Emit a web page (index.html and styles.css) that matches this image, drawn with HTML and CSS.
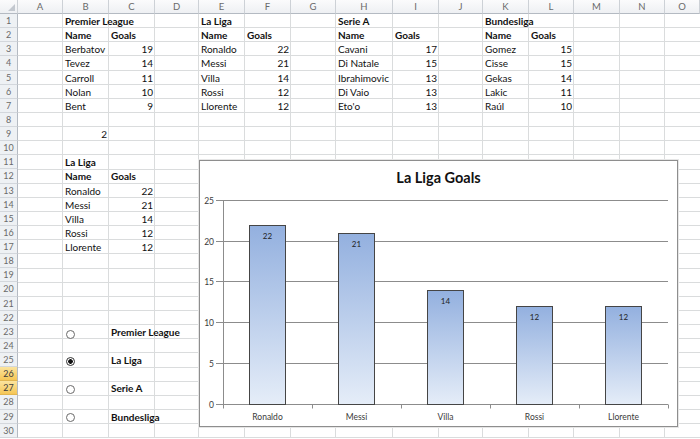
FILE: index.html
```html
<!DOCTYPE html>
<html>
<head>
<meta charset="utf-8">
<link rel="stylesheet" href="styles.css">
</head>
<body>
<div class="sheet">
  <div class="colheads">
    <div class="ch corner"><svg width="7" height="7" viewBox="0 0 7 7"><path d="M7 0V7H0Z" fill="#c3c8cf"/></svg></div>
    <div class="ch w45">A</div>
    <div class="ch w46">B</div>
    <div class="ch w46">C</div>
    <div class="ch w44">D</div>
    <div class="ch w46">E</div>
    <div class="ch w46">F</div>
    <div class="ch w45">G</div>
    <div class="ch w57">H</div>
    <div class="ch w46">I</div>
    <div class="ch w44">J</div>
    <div class="ch w46">K</div>
    <div class="ch w45">L</div>
    <div class="ch w46">M</div>
    <div class="ch w45">N</div>
    <div class="ch wrest">O</div>
  </div>
  <div class="body">
    <div class="rowheads">
      <div class="rh">1</div><div class="rh">2</div><div class="rh">3</div><div class="rh">4</div><div class="rh">5</div>
      <div class="rh">6</div><div class="rh">7</div><div class="rh">8</div><div class="rh">9</div><div class="rh">10</div>
      <div class="rh">11</div><div class="rh">12</div><div class="rh">13</div><div class="rh">14</div><div class="rh">15</div>
      <div class="rh">16</div><div class="rh">17</div><div class="rh">18</div><div class="rh">19</div><div class="rh">20</div>
      <div class="rh">21</div><div class="rh">22</div><div class="rh">23</div><div class="rh">24</div><div class="rh">25</div>
      <div class="rh sel">26</div><div class="rh sel">27</div><div class="rh">28</div><div class="rh">29</div><div class="rh">30</div>
    </div>
    <div class="cells">
      <!-- Premier League -->
      <div class="c b r1 cB">Premier League</div>
      <div class="c b r2 cB">Name</div><div class="c b r2 cC">Goals</div>
      <div class="c r3 cB">Berbatov</div><div class="c n r3 cC">19</div>
      <div class="c r4 cB">Tevez</div><div class="c n r4 cC">14</div>
      <div class="c r5 cB">Carroll</div><div class="c n r5 cC">11</div>
      <div class="c r6 cB">Nolan</div><div class="c n r6 cC">10</div>
      <div class="c r7 cB">Bent</div><div class="c n r7 cC">9</div>
      <!-- La Liga -->
      <div class="c b r1 cE">La Liga</div>
      <div class="c b r2 cE">Name</div><div class="c b r2 cF">Goals</div>
      <div class="c r3 cE">Ronaldo</div><div class="c n r3 cF">22</div>
      <div class="c r4 cE">Messi</div><div class="c n r4 cF">21</div>
      <div class="c r5 cE">Villa</div><div class="c n r5 cF">14</div>
      <div class="c r6 cE">Rossi</div><div class="c n r6 cF">12</div>
      <div class="c r7 cE">Llorente</div><div class="c n r7 cF">12</div>
      <!-- Serie A -->
      <div class="c b r1 cH">Serie A</div>
      <div class="c b r2 cH">Name</div><div class="c b r2 cI">Goals</div>
      <div class="c r3 cH">Cavani</div><div class="c n r3 cI">17</div>
      <div class="c r4 cH">Di Natale</div><div class="c n r4 cI">15</div>
      <div class="c r5 cH">Ibrahimovic</div><div class="c n r5 cI">13</div>
      <div class="c r6 cH">Di Vaio</div><div class="c n r6 cI">13</div>
      <div class="c r7 cH">Eto'o</div><div class="c n r7 cI">13</div>
      <!-- Bundesliga -->
      <div class="c b r1 cK">Bundesliga</div>
      <div class="c b r2 cK">Name</div><div class="c b r2 cL">Goals</div>
      <div class="c r3 cK">Gomez</div><div class="c n r3 cL">15</div>
      <div class="c r4 cK">Cisse</div><div class="c n r4 cL">15</div>
      <div class="c r5 cK">Gekas</div><div class="c n r5 cL">14</div>
      <div class="c r6 cK">Lakic</div><div class="c n r6 cL">11</div>
      <div class="c r7 cK">Raúl</div><div class="c n r7 cL">10</div>
      <!-- selector -->
      <div class="c n r9 cB">2</div>
      <div class="c b r11 cB">La Liga</div>
      <div class="c b r12 cB">Name</div><div class="c b r12 cC">Goals</div>
      <div class="c r13 cB">Ronaldo</div><div class="c n r13 cC">22</div>
      <div class="c r14 cB">Messi</div><div class="c n r14 cC">21</div>
      <div class="c r15 cB">Villa</div><div class="c n r15 cC">14</div>
      <div class="c r16 cB">Rossi</div><div class="c n r16 cC">12</div>
      <div class="c r17 cB">Llorente</div><div class="c n r17 cC">12</div>
      <!-- radio buttons -->
      <div class="radio first r23 cB"></div><div class="c b r23 cC">Premier League</div>
      <div class="radio on r25 cB"></div><div class="c b r25 cC">La Liga</div>
      <div class="radio r27 cB"></div><div class="c b r27 cC">Serie A</div>
      <div class="radio r29 cB"></div><div class="c b r29 cC">Bundesliga</div>
    </div>
  </div>
  <div class="chart">
    <div class="title">La Liga Goals</div>
    <svg class="plot" width="477" height="235" viewBox="0 30 477 235">
      <defs>
        <linearGradient id="barfill" x1="0" y1="0" x2="0" y2="1">
          <stop offset="0" stop-color="#93b0df"/>
          <stop offset="1" stop-color="#e5edf8"/>
        </linearGradient>
      </defs>
      <g stroke="#8c8c8c" stroke-width="1" fill="none">
        <path d="M16 39.5H468M16 80.5H468M16 120.5H468M16 161.5H468M16 202.5H468M16 243.5H468"/>
        <path d="M23.5 39.5V243.5"/>
        <path d="M23.5 243.5V247.5M112.5 243.5V247.5M201.5 243.5V247.5M290.5 243.5V247.5M379.5 243.5V247.5M468.5 243.5V247.5"/>
      </g>
      <g fill="url(#barfill)" stroke="#454545" stroke-width="1">
        <rect x="49.5" y="64.5" width="36" height="179"/>
        <rect x="138.5" y="72.5" width="36" height="171"/>
        <rect x="227.5" y="129.5" width="36" height="114"/>
        <rect x="316.5" y="145.5" width="36" height="98"/>
        <rect x="405.5" y="145.5" width="36" height="98"/>
      </g>
      <g class="barlbl" text-anchor="middle">
        <text x="67.5" y="78">22</text>
        <text x="156.5" y="86">21</text>
        <text x="245.5" y="143">14</text>
        <text x="334.5" y="159">12</text>
        <text x="423.5" y="159">12</text>
      </g>
      <g class="axlbl" text-anchor="end">
        <text x="14" y="42.5">25</text>
        <text x="14" y="83.5">20</text>
        <text x="14" y="123.5">15</text>
        <text x="14" y="164.5">10</text>
        <text x="14" y="205.5">5</text>
        <text x="14" y="246.5">0</text>
      </g>
      <g class="axlbl" text-anchor="middle">
        <text x="67.5" y="259">Ronaldo</text>
        <text x="156.5" y="259">Messi</text>
        <text x="245.5" y="259">Villa</text>
        <text x="334.5" y="259">Rossi</text>
        <text x="423.5" y="259">Llorente</text>
      </g>
    </svg>
  </div>
</div>
</body>
</html>
```
FILE: styles.css
```css
body {
  margin: 0;
  background: #fff;
  font-family: Lato, "Liberation Sans", sans-serif;
  overflow: hidden;
}
.sheet {
  position: relative;
  width: 700px;
  height: 439px;
  overflow: hidden;
}
.colheads {
  display: flex;
  height: 14px;
}
.ch {
  flex: none;
  box-sizing: border-box;
  height: 14px;
  border-right: 1px solid #cdd1d6;
  border-bottom: 1px solid #b4bac2;
  background: linear-gradient(#fbfbfc, #eef0f3);
  font-size: 9.5px;
  line-height: 13px;
  color: #6a6a6a;
  text-align: center;
}
.corner {
  width: 18px;
  display: flex;
  align-items: flex-end;
  justify-content: flex-end;
  padding: 0 2px 2px 0;
}
.corner svg { display: block; }
.w44 { width: 44px; }
.w45 { width: 45px; }
.w46 { width: 46px; }
.w57 { width: 57px; }
.wrest { flex: 1; }
.body {
  display: flex;
}
.rowheads {
  flex: none;
  width: 18px;
  display: flex;
  flex-direction: column;
}
.rh {
  flex: none;
  box-sizing: border-box;
  height: 14.14px;
  border-bottom: 1px solid #d3d7dc;
  border-right: 1px solid #b4bac2;
  background: #eef1f4;
  font-size: 9px;
  line-height: 13.5px;
  color: #6a6a6a;
  text-align: center;
}
.rh.sel {
  background: linear-gradient(#fbe49f, #f5c656);
  border-bottom-color: #e2b650;
  color: #3c3c3c;
}
.cells {
  flex: 1;
  display: grid;
  grid-template-columns: 45px 46px 46px 44px 46px 46px 45px 57px 46px 44px 46px 45px 46px 45px 1fr;
  grid-template-rows: repeat(30, 14.14px);
  background-image:
    linear-gradient(to right,
      transparent 44px, #dadcdd 44px 45px,
      transparent 45px 90px, #dadcdd 90px 91px,
      transparent 91px 136px, #dadcdd 136px 137px,
      transparent 137px 180px, #dadcdd 180px 181px,
      transparent 181px 226px, #dadcdd 226px 227px,
      transparent 227px 272px, #dadcdd 272px 273px,
      transparent 273px 317px, #dadcdd 317px 318px,
      transparent 318px 374px, #dadcdd 374px 375px,
      transparent 375px 420px, #dadcdd 420px 421px,
      transparent 421px 464px, #dadcdd 464px 465px,
      transparent 465px 510px, #dadcdd 510px 511px,
      transparent 511px 555px, #dadcdd 555px 556px,
      transparent 556px 601px, #dadcdd 601px 602px,
      transparent 602px 646px, #dadcdd 646px 647px,
      transparent 647px),
    repeating-linear-gradient(to bottom,
      transparent 0, transparent 13.14px, #dadcdd 13.14px, #dadcdd 14.14px);
}
.c {
  font-size: 10px;
  line-height: 14px;
  padding: 0 2px;
  white-space: nowrap;
  color: #111;
}
.b { font-weight: 700; }
.n { text-align: right; }
.r1 { grid-row: 1; }
.r2 { grid-row: 2; }
.r3 { grid-row: 3; }
.r4 { grid-row: 4; }
.r5 { grid-row: 5; }
.r6 { grid-row: 6; }
.r7 { grid-row: 7; }
.r9 { grid-row: 9; }
.r11 { grid-row: 11; }
.r12 { grid-row: 12; }
.r13 { grid-row: 13; }
.r14 { grid-row: 14; }
.r15 { grid-row: 15; }
.r16 { grid-row: 16; }
.r17 { grid-row: 17; }
.r23 { grid-row: 23; }
.r25 { grid-row: 25; }
.r27 { grid-row: 27; }
.r29 { grid-row: 29; }
.cB { grid-column: 2; }
.cC { grid-column: 3; }
.cE { grid-column: 5; }
.cF { grid-column: 6; }
.cH { grid-column: 8; }
.cI { grid-column: 9; }
.cK { grid-column: 11; }
.cL { grid-column: 12; }
.radio {
  box-sizing: border-box;
  width: 9px;
  height: 9px;
  border: 1px solid #6a6a6a;
  border-radius: 50%;
  background: #fff;
  align-self: center;
  justify-self: start;
  margin: 2px 0 0 3px;
}
.radio.first { margin-top: 6px; }
.radio.on {
  border-color: #333;
  background: radial-gradient(circle, #111 0 2px, #fff 2.6px);
}
.chart {
  position: absolute;
  left: 199px;
  top: 160px;
  width: 479px;
  height: 267px;
  box-sizing: border-box;
  border: 1px solid #8e8e8e;
  background: #fff;
  box-shadow: 0 0 0 1px #e6e6e6;
}
.title {
  box-sizing: border-box;
  height: 30px;
  padding-top: 8px;
  font-size: 14.5px;
  line-height: 18px;
  font-weight: 700;
  text-align: center;
  color: #111;
}
.plot {
  display: block;
}
.barlbl text {
  font-size: 8px;
  fill: #222;
}
.axlbl text {
  font-size: 8.5px;
  fill: #3a3a3a;
}
```
